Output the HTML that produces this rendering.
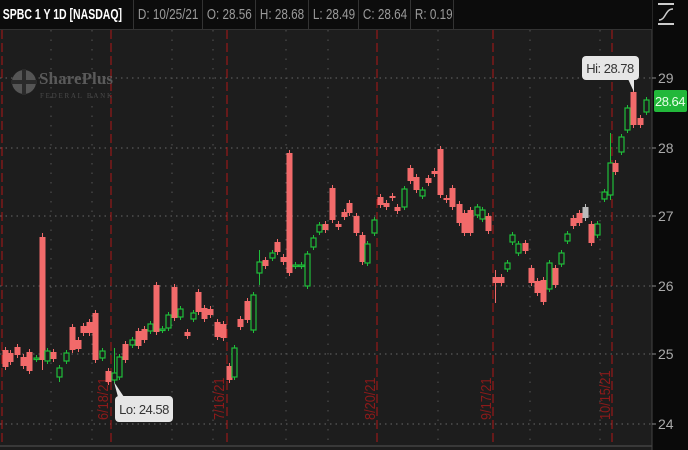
<!DOCTYPE html>
<html><head><meta charset="utf-8"><style>
body{margin:0;width:688px;height:450px;overflow:hidden;background:#1d1d1d;font-family:"Liberation Sans",sans-serif}
#hdr{position:absolute;left:0;top:0;width:652px;height:29px;background:#0c0c0c;border-bottom:1px solid #333}
.c{position:absolute;top:0;height:29px;line-height:29px;color:#9a9a9a;font-size:15px;border-right:1px solid #333;white-space:nowrap;overflow:hidden}
.c span{display:inline-block;transform:scaleX(0.78);transform-origin:0 50%;padding-left:5px}
</style></head><body>
<svg width="688" height="450" style="position:absolute;left:0;top:0" id="s"></svg>
<div id="hdr">
<div class="c" style="left:0;width:133px;color:#fff;font-weight:bold"><span style="transform:scaleX(0.7);padding-left:4px">SPBC 1 Y 1D [NASDAQ]</span></div>
<div class="c" style="left:134px;width:68px"><span>D: 10/25/21</span></div>
<div class="c" style="left:203px;width:52px"><span>O: 28.56</span></div>
<div class="c" style="left:256px;width:52px"><span>H: 28.68</span></div>
<div class="c" style="left:309px;width:49px"><span>L: 28.49</span></div>
<div class="c" style="left:359px;width:51px"><span>C: 28.64</span></div>
<div class="c" style="left:411px;width:42px"><span>R: 0.19</span></div>
</div>
<script>
var s='';
s+='<rect x="0" y="30" width="652" height="416" fill="#1d1d1d"/>';
s+='<rect x="652" y="0" width="36" height="450" fill="#0a0a0a"/>';
s+='<line x1="0" y1="446" x2="652" y2="446" stroke="#555"/>';
[78,148,216,286,354,424].forEach(function(y){s+='<line x1="0" y1="'+y+'" x2="652" y2="'+y+'" stroke="#666" stroke-dasharray="1.5,4"/>';});
[51,92,172,213,286,328,438,530,600].forEach(function(x){s+='<line x1="'+x+'" y1="30" x2="'+x+'" y2="446" stroke="#555" stroke-dasharray="1.5,8"/>';});
[2,111,227,377,493,612].forEach(function(x){s+='<line x1="'+x+'" y1="30" x2="'+x+'" y2="446" stroke="#b01818" stroke-dasharray="9,4"/>';});
var L=[[103,'6/18/21'],[219,'7/16/21'],[370,'8/20/21'],[486,'9/17/21'],[605,'10/15/21']];
L.forEach(function(a){s+='<text transform="translate('+(a[0]+5)+',420) rotate(-90) scale(0.85,1)" fill="#8c1a1a" font-size="15" font-family="Liberation Sans">'+a[1]+'</text>';});
var C=[[5,350,367,'r'],[10,353,362,'r'],[17,347,355,'r'],[23,357,366,'r'],[29,352,371,'r'],[36,358,359,'g'],[42,237,360,'r',233,370],[47,351,361,'g'],[53,352,359,'r'],[59,368,377,'g',365,382],[66,353,361,'g'],[72,327,350,'r'],[78,340,349,'r'],[83,326,333,'r'],[89,322,333,'r'],[95,313,360,'r'],[102,351,358,'g'],[108,371,382,'r'],[114,373,380,'g',348,383],[119,357,377,'g'],[125,344,360,'r'],[132,340,345,'g'],[138,331,346,'r'],[144,329,340,'r'],[150,324,331,'g'],[156,285,332,'r'],[162,329,330,'g'],[168,315,328,'g'],[174,287,318,'r'],[180,309,317,'g'],[187,332,336,'r'],[193,313,319,'g'],[198,292,312,'r'],[204,308,319,'r'],[210,309,315,'r'],[217,322,337,'r'],[223,324,338,'r'],[229,366,380,'r'],[234,348,377,'g'],[240,319,327,'r'],[247,301,320,'r'],[253,295,330,'g'],[259,262,273,'g',250,285],[265,260,266,'r'],[272,253,258,'g'],[277,242,252,'r'],[283,257,262,'r'],[289,153,273,'r'],[295,265,266,'g'],[301,265,266,'g'],[307,254,286,'g'],[313,238,247,'g'],[319,225,232,'g'],[325,224,230,'r'],[332,188,220,'r'],[338,224,227,'r'],[344,212,217,'r'],[349,203,213,'r'],[356,216,233,'r'],[362,235,262,'r'],[367,244,263,'g'],[374,220,233,'g'],[380,197,205,'r'],[386,203,207,'r'],[392,196,198,'r'],[397,207,211,'r'],[404,189,207,'g'],[410,168,181,'r'],[416,177,190,'r'],[422,190,196,'g'],[428,178,183,'r'],[434,171,174,'r'],[440,149,195,'r'],[446,198,200,'r'],[452,188,207,'r'],[459,204,223,'r'],[464,213,233,'r'],[470,210,233,'r'],[477,207,215,'g'],[482,210,219,'g'],[488,216,231,'r'],[495,277,283,'r',270,303],[501,277,283,'r'],[507,263,269,'g'],[512,235,242,'g'],[518,244,253,'g'],[525,243,251,'r'],[531,268,283,'r'],[537,281,293,'r'],[543,280,302,'r'],[549,263,289,'g'],[555,268,285,'r'],[561,253,264,'g'],[567,234,241,'g'],[573,218,226,'r'],[579,213,223,'r'],[585,207,218,'w'],[591,224,243,'r'],[597,224,235,'g'],[604,192,199,'g'],[610,163,195,'g',133,200],[615,163,172,'r'],[621,137,152,'g'],[627,108,130,'g'],[633,92,125,'r'],[640,118,125,'r'],[646,100,112,'g']];
C.forEach(function(c){var x=c[0],t=c[1],b=c[2],k=c[3];var col=k=='r'?'#f26a6a':(k=='g'?'#1fbf3a':'#bbb');var wt=c[4]||t-3,wb=c[5]||b+3;
s+='<line x1="'+(x+.5)+'" y1="'+wt+'" x2="'+(x+.5)+'" y2="'+wb+'" stroke="'+col+'"/>';
var h=Math.max(b-t,1.5);
if(k=='g')s+='<rect x="'+(x-2)+'" y="'+t+'" width="5" height="'+h+'" fill="#1d1d1d" stroke="'+col+'" stroke-width="1.2"/>';
else s+='<rect x="'+(x-2.5)+'" y="'+t+'" width="6" height="'+h+'" fill="'+col+'"/>';});
// watermark
s+='<circle cx="24" cy="82" r="12" fill="#555"/><rect x="22" y="69" width="4" height="26" fill="#2a2a2a"/><rect x="11" y="80" width="26" height="4" fill="#2a2a2a"/>';
s+='<text x="39" y="84" fill="#5a5a5a" font-family="Liberation Serif" font-size="17" font-weight="bold" textLength="74">SharePlus</text>';
s+='<text x="40" y="98" fill="#4a4a4a" font-family="Liberation Serif" font-size="7" textLength="72">FEDERAL BANK</text>';
// labels
s+='<rect x="582" y="56" width="57" height="24" rx="4" fill="#e6e6e6"/><path d="M628 79 L634 92 L634 79Z" fill="#e6e6e6"/>';
s+='<text x="610" y="73" text-anchor="middle" fill="#333" font-size="13" letter-spacing="-0.5">Hi: 28.78</text>';
s+='<rect x="115" y="396" width="58" height="26" rx="4" fill="#e6e6e6"/><path d="M118 397 L114 382 L124 397Z" fill="#e6e6e6"/>';
s+='<text x="144" y="414" text-anchor="middle" fill="#333" font-size="13" letter-spacing="-0.5">Lo: 24.58</text>';
// axis
s+='<line x1="652" y1="0" x2="652" y2="450" stroke="#444"/>';
[[29,78],[28,148],[27,216],[26,286],[25,354],[24,424]].forEach(function(a){s+='<line x1="652" y1="'+a[1]+'" x2="656" y2="'+a[1]+'" stroke="#888"/><text x="658" y="'+(a[1]+5)+'" fill="#aaa" font-size="14">'+a[0]+'</text>';});
s+='<rect x="654" y="90" width="33" height="22" rx="2" fill="#22b83a"/><text x="670" y="106" text-anchor="middle" fill="#e8ffe8" font-size="13" letter-spacing="-0.5">28.64</text>';
s+='<line x1="658" y1="4" x2="674" y2="4" stroke="#ccc" stroke-width="2"/><line x1="658" y1="24" x2="674" y2="24" stroke="#ccc" stroke-width="2"/><path d="M659 20 C666 20 665 9 673 9" stroke="#ccc" fill="none" stroke-width="1.5"/>';
document.getElementById('s').innerHTML=s;
</script>
</body></html>
